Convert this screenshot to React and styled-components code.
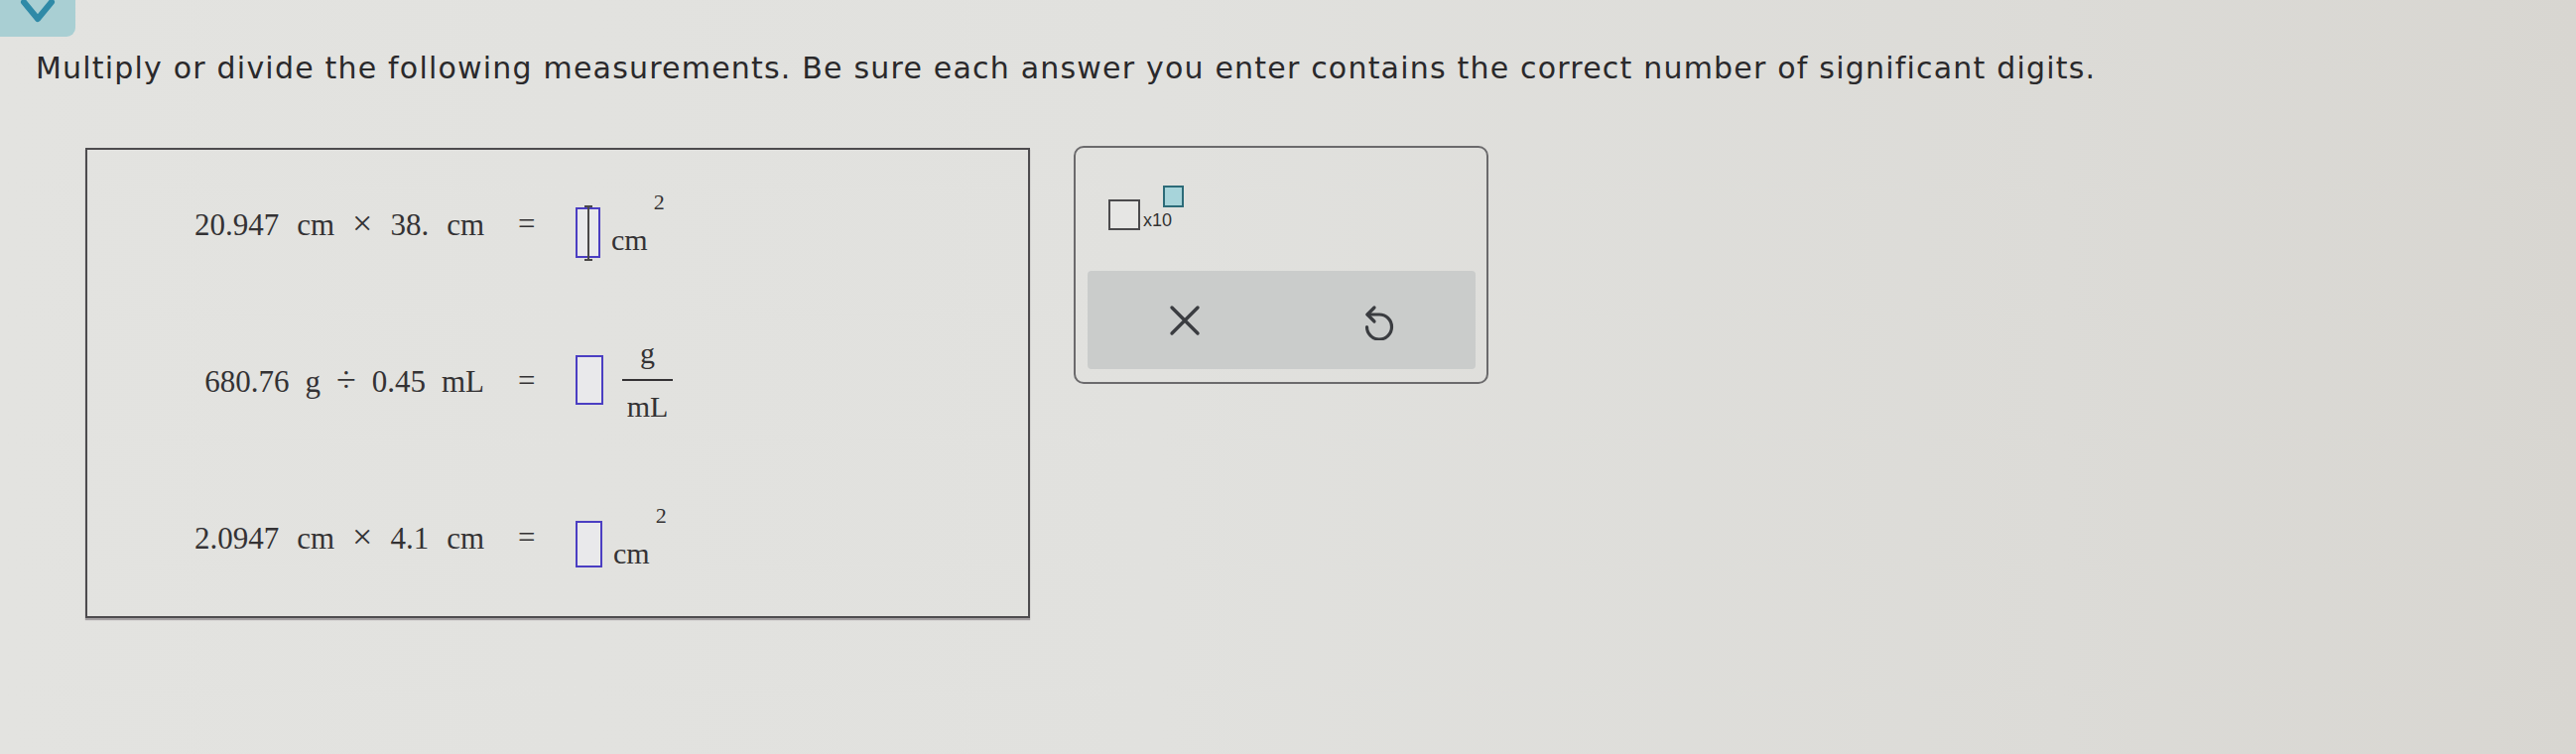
import React from "react";
import styled, { createGlobalStyle } from "styled-components";

const Global = createGlobalStyle`
  html, body { margin: 0; padding: 0; }
  body {
    width: 2596px;
    height: 760px;
    overflow: hidden;
    background: linear-gradient(90deg, #e3e3e0 0%, #e1e1de 45%, #dcdbd7 80%, #d8d6d1 100%);
  }
`;

const Page = styled.div`
  width: 2596px;
  height: 760px;
  display: flex;
  flex-direction: column;
`;

const Tab = styled.div`
  width: 76px;
  height: 37px;
  background: #a9cfd3;
  border-bottom-right-radius: 9px;
  display: flex;
  justify-content: center;
  align-items: flex-start;
`;

const Instruction = styled.p`
  margin: 15px 0 0 36px;
  font-family: "DejaVu Sans", Verdana, sans-serif;
  font-size: 30px;
  letter-spacing: 1.2px;
  line-height: 34px;
  color: #2a292b;
  white-space: nowrap;
`;

const Content = styled.div`
  display: flex;
  align-items: flex-start;
  margin-top: 61px;
  padding-left: 86px;
`;

const ProblemBox = styled.div`
  box-sizing: border-box;
  width: 952px;
  height: 474px;
  margin-top: 2px;
  border: 2px solid #4d4b4e;
  box-shadow: 0 2px 1px rgba(40, 30, 40, 0.35);
  padding-top: 24px;
  display: flex;
  flex-direction: column;
  gap: 58px;
`;

const Row = styled.div`
  height: 100px;
  display: grid;
  grid-template-columns: 400px 92px auto;
  align-items: center;
  font-family: "Liberation Serif", "Times New Roman", serif;
  font-size: 31px;
  color: #343234;
`;

const Expr = styled.div`
  display: flex;
  justify-content: flex-end;
  align-items: baseline;
  gap: ${(p) => p.$gap || 18}px;
  line-height: 1;
`;

const Op = styled.span`
  font-size: 36px;
`;

const Equals = styled.span`
  justify-self: start;
  margin-left: 34px;
  line-height: 1;
`;

const Answer = styled.div`
  height: 60px;
  display: flex;
  align-items: ${(p) => (p.$center ? "center" : "flex-start")};
`;

const AnswerBox = styled.div`
  position: relative;
  box-sizing: border-box;
  width: ${(p) => p.$w || 25}px;
  height: ${(p) => p.$h || 48}px;
  margin-top: ${(p) => (p.$center ? 0 : 14)}px;
  border: 2px solid #4b3ec2;
  background: #e9e9eb;
  flex-shrink: 0;
`;

const Cursor = styled.span`
  position: absolute;
  left: 50%;
  top: -4px;
  bottom: -5px;
  width: 2px;
  margin-left: -1px;
  background: #4a4848;
  &::before, &::after {
    content: "";
    position: absolute;
    left: -3px;
    width: 8px;
    height: 2px;
    background: #4a4848;
  }
  &::before { top: 0; }
  &::after { bottom: 0; }
`;

const Unit = styled.span`
  margin-left: 11px;
  margin-top: 32px;
  font-size: 30px;
  line-height: 1;
`;

const Sup = styled.span`
  margin-left: 6px;
  margin-top: -2px;
  font-size: 22px;
  line-height: 1;
`;

const Fraction = styled.div`
  display: flex;
  flex-direction: column;
  align-items: center;
  margin-left: 19px;
  width: 51px;
  font-size: 30px;
`;

const FracPart = styled.span`
  line-height: 30px;
`;

const FracBar = styled.span`
  align-self: stretch;
  height: 2px;
  background: #343234;
  margin: ${(p) => p.$m};
`;

const Panel = styled.div`
  box-sizing: border-box;
  width: 418px;
  height: 240px;
  margin-left: 44px;
  border: 2px solid #6b6a6c;
  border-radius: 10px;
  padding: 38px 11px 13px 12px;
  display: flex;
  flex-direction: column;
`;

const SciRow = styled.div`
  height: 45px;
  margin-left: 21px;
  display: flex;
  align-items: flex-end;
`;

const Mantissa = styled.div`
  box-sizing: border-box;
  width: 32px;
  height: 31px;
  border: 2px solid #4b4a4c;
  background: #e6e6e4;
`;

const TimesTen = styled.span`
  margin-left: 3px;
  margin-bottom: 1px;
  font-family: "Liberation Sans", Arial, sans-serif;
  font-size: 18px;
  line-height: 18px;
  color: #333;
`;

const Exponent = styled.div`
  box-sizing: border-box;
  align-self: flex-start;
  width: 21px;
  height: 22px;
  margin-left: -9px;
  border: 2px solid #2c6b78;
  background: #a7d4da;
`;

const ButtonBar = styled.div`
  margin-top: auto;
  height: 99px;
  border-radius: 4px;
  background: #cacccb;
  display: flex;
`;

const IconButton = styled.button`
  flex: 1;
  border: none;
  background: transparent;
  padding: 0;
  display: flex;
  align-items: center;
  justify-content: center;
  color: #3a3c40;
  cursor: pointer;
`;

const Chevron = () => (
  <svg width="40" height="26" viewBox="0 0 40 26">
    <path d="M6 2 L20 19 L34 2" fill="none" stroke="#2f8aa7" strokeWidth="6" strokeLinecap="round" strokeLinejoin="round" />
  </svg>
);

const XIcon = () => (
  <svg width="34" height="34" viewBox="0 0 34 34">
    <path d="M4 4 L30 30 M30 4 L4 30" fill="none" stroke="currentColor" strokeWidth="3.4" strokeLinecap="round" />
  </svg>
);

const UndoIcon = () => (
  <svg width="38" height="40" viewBox="0 0 36 40">
    <path
      d="M7 14 H19 A12.5 12.5 0 1 1 6.5 26.5"
      fill="none"
      stroke="currentColor"
      strokeWidth="3.2"
      strokeLinecap="round"
    />
    <path d="M14 7 L7 14 L14 21" fill="none" stroke="currentColor" strokeWidth="3.2" strokeLinecap="round" strokeLinejoin="round" />
  </svg>
);

export default function App() {
  return (
    <>
      <Global />
      <Page>
        <Tab>
          <Chevron />
        </Tab>
        <Instruction>
          Multiply or divide the following measurements. Be sure each answer you enter contains the correct number of significant digits.
        </Instruction>
        <Content>
          <ProblemBox>
            <Row>
              <Expr>
                <span>20.947</span>
                <span>cm</span>
                <Op>×</Op>
                <span>38.</span>
                <span>cm</span>
              </Expr>
              <Equals>=</Equals>
              <Answer>
                <AnswerBox $w={25} $h={51}>
                  <Cursor />
                </AnswerBox>
                <Unit>cm</Unit>
                <Sup>2</Sup>
              </Answer>
            </Row>
            <Row>
              <Expr $gap={16}>
                <span>680.76</span>
                <span>g</span>
                <Op>÷</Op>
                <span>0.45</span>
                <span>mL</span>
              </Expr>
              <Equals>=</Equals>
              <Answer $center>
                <AnswerBox $center $w={28} $h={50} />
                <Fraction>
                  <FracPart>g</FracPart>
                  <FracBar $m="11px 0 11px" />
                  <FracPart>mL</FracPart>
                </Fraction>
              </Answer>
            </Row>
            <Row>
              <Expr>
                <span>2.0947</span>
                <span>cm</span>
                <Op>×</Op>
                <span>4.1</span>
                <span>cm</span>
              </Expr>
              <Equals>=</Equals>
              <Answer>
                <AnswerBox $w={27} $h={47} />
                <Unit>cm</Unit>
                <Sup>2</Sup>
              </Answer>
            </Row>
          </ProblemBox>
          <Panel>
            <SciRow>
              <Mantissa />
              <TimesTen>x10</TimesTen>
              <Exponent />
            </SciRow>
            <ButtonBar>
              <IconButton aria-label="Clear">
                <XIcon />
              </IconButton>
              <IconButton aria-label="Undo">
                <UndoIcon />
              </IconButton>
            </ButtonBar>
          </Panel>
        </Content>
      </Page>
    </>
  );
}
